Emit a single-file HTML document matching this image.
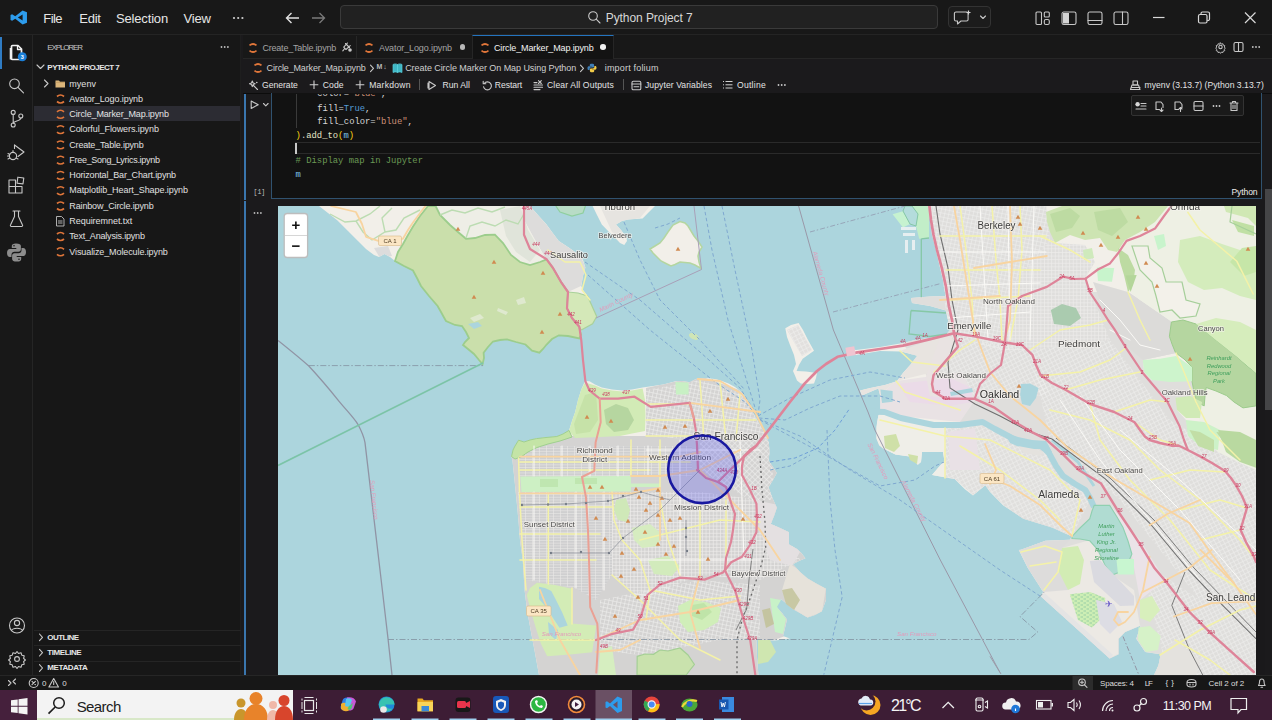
<!DOCTYPE html>
<html lang="en"><head>
<meta charset="utf-8">
<title>Circle_Marker_Map.ipynb - Python Project 7 - Visual Studio Code</title>
<style>
*{box-sizing:border-box;margin:0;padding:0}
html,body{width:1272px;height:720px;overflow:hidden;background:#161616}
body{font-family:"Liberation Sans",sans-serif;color:#ccc;position:relative;font-size:9px}
.abs{position:absolute}
.t{position:absolute;white-space:nowrap;line-height:1;color:#d4d4d4}
svg{position:absolute;overflow:visible}
#titlebar{left:0;top:0;width:1272px;height:35px;background:#181818;border-bottom:1px solid #242424}
#activity{left:0;top:35px;width:33px;height:640px;background:#181818;border-right:1px solid #252525}
#sidebar{left:33px;top:35px;width:208px;height:640px;background:#171717;border-right:1px solid #1e1e1e}
#editor{left:241px;top:35px;width:1031px;height:640px;background:#1b1a1c}
#statusbar{left:0;top:675px;width:1272px;height:15px;background:#171717;border-top:1px solid #262626}
#taskbar{left:0;top:690px;width:1272px;height:30px;background:#3d1d35}
.menu{font-size:13px;color:#e6e6e6}
.fn{font-size:9px;color:#e0e0e0;left:69.3px}
.hd{font-size:8px;font-weight:bold;color:#e6e6e6;left:47.3px}
.ic{stroke:#c8c8c8;fill:none;stroke-width:1.1;stroke-linecap:round;stroke-linejoin:round}
.jp{stroke:#e0763a;fill:none;stroke-width:1.7;stroke-linecap:butt}
.tb{font-size:8.6px;color:#e4e4e4}
.code{font-family:"Liberation Mono",monospace;font-size:8.85px;color:#d4d4d4;position:absolute;white-space:pre;line-height:1}
.sb{font-size:8px;color:#dedede}
</style>
</head>
<body>
<div id="titlebar" class="abs"></div>
<div id="activity" class="abs"></div>
<div id="sidebar" class="abs"></div>
<div id="editor" class="abs"></div>

<!-- ===== TITLE BAR ===== -->
<svg style="left:9.5px;top:10px" width="17.5" height="15" viewBox="0 0 100 100" preserveAspectRatio="none"><path fill="#2d9cec" fill-rule="evenodd" d="M72 3 L97 15 V85 L72 97 L30 58 L12 72 L3 67 V33 L12 28 L30 42 Z M72 30 L45 50 L72 70 Z"></path></svg>
<span class="t menu" style="left: 43.3px; top: 11.59px; letter-spacing: -0.563px;">File</span>
<span class="t menu" style="left: 79.3px; top: 11.59px; letter-spacing: -0.277px;">Edit</span>
<span class="t menu" style="left: 116px; top: 11.59px; letter-spacing: -0.165px;">Selection</span>
<span class="t menu" style="left: 183.6px; top: 11.59px; letter-spacing: -0.238px;">View</span>
<svg style="left:232px;top:15px" width="13" height="6"><circle cx="2" cy="3" r="1.1" fill="#d0d0d0"></circle><circle cx="6.2" cy="3" r="1.1" fill="#d0d0d0"></circle><circle cx="10.4" cy="3" r="1.1" fill="#d0d0d0"></circle></svg>
<svg style="left:285px;top:11px" width="42" height="14"><path d="M14 7H1.5M6.5 2L1.5 7l5 5" stroke="#e0e0e0" stroke-width="1.4" fill="none"></path><path d="M27 7h12.5M34.5 2l5 5-5 5" stroke="#7a7a7a" stroke-width="1.3" fill="none"></path></svg>
<div class="abs" style="left:340px;top:5px;width:598px;height:24px;background:#212121;border:1px solid #3a3a3a;border-radius:4px"></div>
<svg style="left:587px;top:10px" width="14" height="14"><circle cx="6" cy="6" r="4.3" class="ic" stroke-width="1.2"></circle><path d="M9.2 9.2L13 13" class="ic" stroke-width="1.3"></path></svg>
<span class="t" style="left: 605.7px; font-size: 12px; color: rgb(216, 216, 216); top: 12.36px; letter-spacing: -0.066px;">Python Project 7</span>
<div class="abs" style="left:947.5px;top:5.5px;width:43px;height:22.5px;border:1px solid #333;border-radius:4px;background:#1c1c1c"></div>
<svg style="left:953px;top:9.5px" width="34" height="15"><path class="ic" stroke-width="1.3" d="M3 2h10.5a1.6 1.6 0 0 1 1.6 1.6v5.8a1.6 1.6 0 0 1-1.6 1.6H8l-3.5 3v-3H3a1.6 1.6 0 0 1-1.6-1.6V3.6A1.6 1.6 0 0 1 3 2z"></path><path d="M15.5 0.5v4M13.5 2.5h4" stroke="#d8d8d8" stroke-width="1.2"></path><path class="ic" d="M27.5 6l2.5 2.5L32.500 6" stroke-width="1.2"></path></svg>
<svg style="left:1035px;top:10.5px" width="95" height="15"><g class="ic" stroke-width="1.2"><rect x="1" y="1" width="5.5" height="12.5" rx="1"></rect><rect x="9.3" y="1" width="5" height="5" rx="1"></rect><rect x="9.3" y="8.5" width="5" height="5" rx="1.6"></rect><rect x="27" y="1" width="14" height="12.500" rx="1.8"></rect><rect x="53" y="1" width="14" height="12.5" rx="1.800"></rect><path d="M53 9.500h14"></path><rect x="79" y="1" width="14" height="12.5" rx="1.8"></rect><path d="M87.500 1v12.500"></path></g><path d="M28 2h6v10.500h-6z" fill="#d4d4d4"></path></svg>
<svg style="left:1152px;top:11px" width="106" height="14"><g stroke="#d8d8d8" stroke-width="1.2" fill="none"><path d="M1 6.500h11.500"></path><rect x="46.500" y="3.500" width="8.500" height="8.500" rx="1.500"></rect><path d="M49 3.400V2.500a1.500 1.500 0 0 1 1.500-1.500H56a1.500 1.500 0 0 1 1.500 1.500V8a1.500 1.500 0 0 1-1.500 1.500h-.8"></path><path d="M93 1.500l10.500 10.500M103.500 1.500L93 12"></path></g></svg>

<!-- ===== ACTIVITY BAR ===== -->
<div class="abs" style="left:0;top:37px;width:2px;height:31.500px;background:#2f7cc4"></div>
<svg style="left:0;top:35px" width="33" height="640">
<!-- files -->
<g stroke="#f2f2f2" stroke-width="1.700" fill="none" stroke-linejoin="round"><path d="M12.500 10.500h5.500l3.500 3.500v9.500a1 1 0 0 1-1 1h-8a1 1 0 0 1-1-1v-12a1 1 0 0 1 1-1z" fill="#181818"></path><path d="M17.500 10.500v4h4" stroke-width="1.300"></path><path d="M10.500 13v11.500" stroke-width="1.600"></path></g>
<circle cx="22.300" cy="21.800" r="4.500" fill="#1a7fd8"></circle>
<text x="22.300" y="23.800" font-size="5.500" fill="#fff" text-anchor="middle" font-family="'Liberation Sans',sans-serif" font-weight="bold">3</text>
<!-- search -->
<g class="ic" stroke="#9a9a9a" stroke-width="1.400"><circle cx="14.500" cy="48.800" r="4.800"></circle><path d="M18 52.300l5.500 5.500"></path></g>
<!-- scm -->
<g class="ic" stroke="#9a9a9a" stroke-width="1.300"><circle cx="13.200" cy="77.400" r="2"></circle><circle cx="13.200" cy="90" r="2"></circle><circle cx="20.800" cy="81" r="2"></circle><path d="M13.200 79.400v8.600M20.800 83c0 3.500-7.600 2.500-7.600 5.500"></path></g>
<!-- debug -->
<g class="ic" stroke="#9a9a9a" stroke-width="1.300"><path d="M14.500 110l9.500 7-6 4.500"></path><path d="M14.500 110v3.500"></path><circle cx="13" cy="121" r="3.600"></circle><path d="M8 118.500l1.800 1M8 124l1.800-1M18 124l-1.800-1M13 117v-1.500M7.500 121h2"></path></g>
<!-- extensions -->
<g class="ic" stroke="#9a9a9a" stroke-width="1.300"><path d="M9 145h6.500v13H9zM15.500 151.500H22v6.500h-6.500M9 151.500h6.500"></path><rect x="17.500" y="142.500" width="6" height="6" transform="rotate(8 20 145)"></rect></g>
<!-- flask -->
<g class="ic" stroke="#9a9a9a" stroke-width="1.300"><path d="M13 176h7M14.500 176v5.500l-4 8.500a1 1 0 0 0 1 1.500h10a1 1 0 0 0 1-1.500l-4-8.500V176"></path></g>
<!-- python -->
<g fill="#8c8c8c"><path d="M16 208.500c-3 0-4.200 1-4.200 2.600v2h4.500v.8H10c-1.800 0-3 1.400-3 4s1.200 4 2.800 4h1.700v-2.400c0-1.600 1.300-2.800 3-2.800h4c1.400 0 2.400-1 2.400-2.400v-3.200c0-1.600-1.400-2.600-4.900-2.600zm-2 1.500a.8.800 0 1 1 0 1.600.8.800 0 0 1 0-1.600z"></path><path d="M17 226.500c3 0 4.200-1 4.200-2.600v-2h-4.500v-.8H23c1.800 0 3-1.400 3-4s-1.200-4-2.800-4h-1.700v2.400c0 1.600-1.300 2.800-3 2.800h-4c-1.400 0-2.400 1-2.400 2.400v3.200c0 1.600 1.400 2.600 4.900 2.600zm2-1.500a.8.800 0 1 1 0-1.600.8.800 0 0 1 0 1.600z"></path></g>
<!-- account -->
<g class="ic" stroke="#9a9a9a" stroke-width="1.200"><circle cx="17" cy="590.500" r="7.500"></circle><circle cx="17" cy="588" r="2.600"></circle><path d="M11.500 595.500c1.500-3 9.500-3 11 0"></path></g>
<!-- gear -->
<g class="ic" stroke="#9a9a9a" stroke-width="1.300"><circle cx="17" cy="624" r="2.400"></circle><path d="M17 616.500l1.500 2 2.500-.8 .8 2.500 2.400 .6-.6 2.500 1.800 1.700-1.800 1.700 .6 2.500-2.400 .6-.8 2.500-2.500-.8-1.500 2-1.500-2-2.500 .8-.8-2.500-2.400-.6 .6-2.500L8.600 625l1.800-1.700-.6-2.500 2.400-.6 .8-2.500 2.500 .8z"></path></g>
</svg>

<!-- ===== SIDEBAR ===== -->
<span class="t" style="left: 47.3px; font-size: 8px; color: rgb(196, 196, 196); top: 43.84px; letter-spacing: -1.135px;">EXPLORER</span>
<svg style="left:220px;top:44px" width="10" height="6"><circle cx="1.500" cy="3" r=".9" fill="#c0c0c0"></circle><circle cx="4.700" cy="3" r=".9" fill="#c0c0c0"></circle><circle cx="7.900" cy="3" r=".9" fill="#c0c0c0"></circle></svg>
<svg style="left:36px;top:63px" width="9" height="8"><path class="ic" d="M1 2l3.500 3.500L8 2" stroke-width="1.200"></path></svg>
<span class="t hd" style="top: 63.64px; letter-spacing: -0.501px;">PYTHON PROJECT 7</span>
<svg style="left:43px;top:79px" width="7" height="9"><path class="ic" d="M1.500 1l3.500 3.500L1.500 8" stroke-width="1.200"></path></svg>
<svg style="left:55px;top:78.500px" width="11" height="9"><path d="M.5 1.500h3.500l1 1.300h5v5.700h-9.500z" fill="#dcb67a"></path><path d="M.5 3.300h9.500" stroke="#b08d55" stroke-width=".6"></path></svg>
<div class="abs" style="left:34px;top:105.700px;width:206px;height:15.500px;background:#2c2c33"></div>
<span class="t fn" style="top: 79.57px; letter-spacing: 0.037px;">myenv</span>
<span class="t fn" style="top: 94.77px; letter-spacing: -0.071px;">Avator_Logo.ipynb</span>
<span class="t fn" style="color: rgb(228, 228, 228); top: 110.07px; letter-spacing: -0.132px;">Circle_Marker_Map.ipynb</span>
<span class="t fn" style="top: 125.37px; letter-spacing: -0.093px;">Colorful_Flowers.ipynb</span>
<span class="t fn" style="top: 140.67px; letter-spacing: -0.187px;">Create_Table.ipynb</span>
<span class="t fn" style="top: 155.97px; letter-spacing: -0.288px;">Free_Song_Lyrics.ipynb</span>
<span class="t fn" style="top: 171.17px; letter-spacing: -0.149px;">Horizontal_Bar_Chart.ipynb</span>
<span class="t fn" style="top: 186.47px; letter-spacing: -0.067px;">Matplotlib_Heart_Shape.ipynb</span>
<span class="t fn" style="top: 201.77px; letter-spacing: -0.142px;">Rainbow_Circle.ipynb</span>
<span class="t fn" style="top: 216.97px; letter-spacing: -0.042px;">Requiremnet.txt</span>
<span class="t fn" style="top: 232.27px; letter-spacing: -0.192px;">Text_Analysis.ipynb</span>
<span class="t fn" style="top: 247.57px; letter-spacing: -0.104px;">Visualize_Molecule.ipynb</span>
<svg style="left:55px;top:90px" width="12" height="170">
<g class="jp">
<path d="M2 6.500c2-1.800 5-1.800 7 0M2 11.500c2 1.800 5 1.800 7 0"></path>
<path d="M2 21.800c2-1.800 5-1.800 7 0M2 26.800c2 1.800 5 1.800 7 0"></path>
<path d="M2 37.100c2-1.800 5-1.800 7 0M2 42.100c2 1.800 5 1.800 7 0"></path>
<path d="M2 52.400c2-1.800 5-1.800 7 0M2 57.400c2 1.800 5 1.800 7 0"></path>
<path d="M2 67.600c2-1.800 5-1.800 7 0M2 72.600c2 1.800 5 1.800 7 0"></path>
<path d="M2 82.900c2-1.800 5-1.800 7 0M2 87.900c2 1.800 5 1.800 7 0"></path>
<path d="M2 98.200c2-1.800 5-1.800 7 0M2 103.200c2 1.800 5 1.800 7 0"></path>
<path d="M2 113.500c2-1.800 5-1.800 7 0M2 118.500c2 1.800 5 1.800 7 0"></path>
<path d="M2 144c2-1.800 5-1.800 7 0M2 149c2 1.800 5 1.800 7 0"></path>
<path d="M2 159.300c2-1.800 5-1.800 7 0M2 164.300c2 1.800 5 1.800 7 0"></path>
</g>
<g stroke="#c0c0c0" stroke-width=".9" fill="none"><path d="M1.500 126.500h5l2.500 2.500v7h-7.500z"></path><path d="M3 131h4.500M3 133h4.500"></path></g>
</svg>
<!-- bottom panes -->
<div class="abs" style="left:34px;top:629.500px;width:207px;height:1px;background:#252525"></div>
<div class="abs" style="left:34px;top:645.200px;width:207px;height:1px;background:#252525"></div>
<div class="abs" style="left:34px;top:660.600px;width:207px;height:1px;background:#252525"></div>
<svg style="left:37.500px;top:633px" width="7" height="40"><g class="ic" stroke-width="1.200"><path d="M1.500 1l3 3.300-3 3.300M1.500 16.400l3 3.300-3 3.300M1.500 31.700l3 3.300-3 3.300"></path></g></svg>
<span class="t hd" style="top: 633.64px; letter-spacing: -0.544px;">OUTLINE</span>
<span class="t hd" style="top: 649.04px; letter-spacing: -0.418px;">TIMELINE</span>
<span class="t hd" style="top: 664.34px; letter-spacing: -0.376px;">METADATA</span>

<!-- ===== TABS ===== -->
<div class="abs" style="left:243px;top:35px;width:1029px;height:23.500px;background:#181818;border-bottom:1px solid #262626"></div>
<div class="abs" style="left:355.500px;top:36px;width:1px;height:22px;background:#262626"></div>
<div class="abs" style="left:472px;top:35px;width:142px;height:24px;background:#131313;border-top:1.500px solid #2474bf;border-left:1px solid #262626;border-right:1px solid #262626"></div>
<svg style="left:248px;top:42px" width="250" height="12"><g class="jp" stroke-width="1.800"><path d="M1.500 3.400c2-1.600 5-1.600 7 0M1.500 8.600c2 1.600 5 1.600 7 0"></path><path d="M117.500 3.400c2-1.600 5-1.600 7 0M117.500 8.600c2 1.600 5 1.600 7 0"></path><path d="M233.500 3.400c2-1.600 5-1.600 7 0M233.500 8.600c2 1.600 5 1.600 7 0"></path></g></svg>
<span class="t" style="left: 262.5px; font-size: 9px; color: rgb(164, 164, 164); top: 43.67px; letter-spacing: -0.226px;">Create_Table.ipynb</span>
<svg style="left:342px;top:42px" width="11" height="11"><g class="ic" stroke="#b0b0b0" stroke-width="1"><path d="M3.500 1.500l4 4M5.500 1l-3.800 4.200 2.300 2.300L8.200 3.700M2.700 6.500L.8 8.800"></path></g><circle cx="8" cy="8" r="1.800" fill="#c8c8c8"></circle></svg>
<span class="t" style="left: 379px; font-size: 9px; color: rgb(164, 164, 164); top: 43.67px; letter-spacing: -0.112px;">Avator_Logo.ipynb</span>
<div class="abs" style="left:459.700px;top:44.200px;width:5.600px;height:5.600px;border-radius:50%;background:#b8b8b8"></div>
<span class="t" style="left: 494px; font-size: 9px; color: rgb(244, 244, 244); top: 43.67px; letter-spacing: -0.132px;">Circle_Marker_Map.ipynb</span>
<div class="abs" style="left:600.200px;top:44.200px;width:5.600px;height:5.600px;border-radius:50%;background:#f0f0f0"></div>
<svg style="left:1214px;top:41px" width="52" height="12"><g class="ic" stroke="#c4c4c4" stroke-width="1"><circle cx="6.500" cy="6" r="1.700"></circle><path d="M6.500 1l1.100 1.500 1.800-.5.500 1.800 1.800.500-.5 1.700 1 1.400-1 1.400.5 1.700-1.800.500-.5 1.800-1.800-.5-1.100 1.500-1.100-1.500-1.800.5-.5-1.800-1.800-.5.500-1.700-1-1.400 1-1.400-.5-1.700 1.800-.5.500-1.800 1.800.5z" transform="translate(1.170 1.080) scale(.82)"></path><rect x="20" y="1.500" width="9" height="9" rx="1.500"></rect><path d="M24.500 1.500v9"></path></g><circle cx="38.800" cy="6" r=".9" fill="#c4c4c4"></circle><circle cx="42" cy="6" r=".9" fill="#c4c4c4"></circle><circle cx="45.200" cy="6" r=".9" fill="#c4c4c4"></circle></svg>

<!-- ===== BREADCRUMB ===== -->
<svg style="left:253px;top:62px" width="12" height="12"><g class="jp" stroke-width="1.800"><path d="M1.500 3.400c2-1.600 5-1.600 7 0M1.500 8.600c2 1.600 5 1.600 7 0"></path></g></svg>
<span class="t" style="left: 266.6px; font-size: 9px; color: rgb(208, 208, 208); top: 63.67px; letter-spacing: -0.154px;">Circle_Marker_Map.ipynb</span>
<svg style="left:369px;top:63.500px" width="6" height="9"><path class="ic" stroke="#aaa" d="M1.500 1.200l3 3.200-3 3.200"></path></svg>
<span class="t" style="left: 376.5px; font-size: 7px; font-weight: bold; color: rgb(184, 184, 184); top: 63.21px; letter-spacing: 0.828px;">M↓</span>
<svg style="left:392px;top:62.500px" width="11" height="11"><path d="M1 1.500c1.500-.8 3-.8 4.500 0v8c-1.500-.8-3-.8-4.500 0zM5.500 1.500c1.500-.8 3-.8 4.500 0v8c-1.500-.8-3-.8-4.500 0z" fill="#3fb6c4" stroke="#59d0dd" stroke-width=".7"></path></svg>
<span class="t" style="left: 405.2px; font-size: 9px; color: rgb(208, 208, 208); top: 63.67px; letter-spacing: -0.064px;">Create Circle Marker On Map Using Python</span>
<svg style="left:578.500px;top:63.500px" width="6" height="9"><path class="ic" stroke="#aaa" d="M1.500 1.200l3 3.200-3 3.200"></path></svg>
<svg style="left:587px;top:62.500px" width="10" height="10" viewBox="6 208 21 19"><path fill="#3f7fb8" d="M16 208.500c-3 0-4.200 1-4.200 2.600v2h4.500v.8H10c-1.800 0-3 1.400-3 4s1.200 4 2.800 4h1.700v-2.400c0-1.600 1.300-2.800 3-2.800h4c1.400 0 2.400-1 2.400-2.400v-3.200c0-1.600-1.400-2.600-4.900-2.600z"></path><path fill="#f2cb48" d="M17 226.500c3 0 4.200-1 4.200-2.600v-2h-4.500v-.8H23c1.800 0 3-1.400 3-4s-1.200-4-2.800-4h-1.700v2.400c0 1.600-1.300 2.800-3 2.800h-4c-1.400 0-2.400 1-2.400 2.400v3.200c0 1.600 1.400 2.600 4.900 2.600z"></path></svg>
<span class="t" style="left: 604.7px; font-size: 9px; color: rgb(208, 208, 208); top: 63.67px; letter-spacing: 0.191px;">import folium</span>

<!-- ===== NOTEBOOK TOOLBAR ===== -->
<div class="abs" style="left:243px;top:92.500px;width:1029px;height:1px;background:#0c0c0c"></div>
<svg style="left:248.500px;top:79.500px" width="10" height="10"><g class="ic" stroke="#d0d0d0" stroke-width="1"><path d="M3.300 1l.8 2 2 .8-2 .8-.8 2-.8-2-2-.8 2-.8zM4.500 5.500l4 4"></path></g><circle cx="7.800" cy="2.500" r=".8" fill="#d0d0d0"></circle></svg>
<span class="t tb" style="left: 262px; top: 80.76px; letter-spacing: -0.005px;">Generate</span>
<svg style="left:309px;top:80px" width="10" height="10"><path d="M5 .5v8.500M.7 4.800h8.600" stroke="#d0d0d0" stroke-width="1.100"></path></svg>
<span class="t tb" style="left: 322.8px; top: 80.76px; letter-spacing: 0.063px;">Code</span>
<svg style="left:354.500px;top:80px" width="10" height="10"><path d="M5 .5v8.500M.7 4.800h8.600" stroke="#d0d0d0" stroke-width="1.100"></path></svg>
<span class="t tb" style="left: 369.2px; top: 80.76px; letter-spacing: 0.23px;">Markdown</span>
<div class="abs" style="left:419.300px;top:79px;width:1px;height:11px;background:#555"></div>
<svg style="left:427px;top:79.500px" width="11" height="11"><path class="ic" stroke="#d8d8d8" stroke-width="1.200" d="M2 1.500l6.500 4-6.500 4zM1 3v5"></path></svg>
<span class="t tb" style="left: 442.4px; top: 80.76px; letter-spacing: 0.052px;">Run All</span>
<svg style="left:481.500px;top:79.500px" width="11" height="11"><path class="ic" stroke="#d8d8d8" stroke-width="1.200" d="M2.200 3.500a4 4 0 1 1-.7 3.200M1.200 1.200v2.600h2.600"></path></svg>
<span class="t tb" style="left: 494.8px; top: 80.76px; letter-spacing: -0.043px;">Restart</span>
<svg style="left:532.500px;top:79.500px" width="11" height="11"><g class="ic" stroke="#d0d0d0" stroke-width="1"><path d="M1 5h8.500M1 7.300h8.500M1 9.600h6M5.500 .7l2.800 2.800M8.300 .7L5.500 3.500M1 2.600h3"></path></g></svg>
<span class="t tb" style="left: 547px; top: 80.76px; letter-spacing: 0.148px;">Clear All Outputs</span>
<div class="abs" style="left:623.300px;top:79px;width:1px;height:11px;background:#555"></div>
<svg style="left:630.500px;top:79.500px" width="11" height="11"><g class="ic" stroke="#d0d0d0" stroke-width="1"><rect x="1" y="1.300" width="8.800" height="8.400" rx="1.300"></rect><path d="M1 4h8.800M3 6.800h4.800"></path></g></svg>
<span class="t tb" style="left: 645px; top: 80.76px; letter-spacing: 0.073px;">Jupyter Variables</span>
<svg style="left:721.500px;top:80px" width="11" height="10"><path d="M1 1.500h1M3.500 1.500h7M1 4.800h1M3.500 4.800h7M1 8h1M3.500 8h7" stroke="#d0d0d0" stroke-width="1"></path></svg>
<span class="t tb" style="left: 737px; top: 80.76px; letter-spacing: 0.252px;">Outline</span>
<svg style="left:777px;top:82px" width="10" height="6"><circle cx="1.500" cy="3" r=".9" fill="#c8c8c8"></circle><circle cx="4.700" cy="3" r=".9" fill="#c8c8c8"></circle><circle cx="7.900" cy="3" r=".9" fill="#c8c8c8"></circle></svg>
<svg style="left:1129.500px;top:79.500px" width="11" height="11"><g class="ic" stroke="#d0d0d0" stroke-width="1"><rect x="3" y="1" width="4.500" height="4"></rect><path d="M2 5h6.500l1.500 4.500h-9.500zM1 7.500h9"></path></g></svg>
<span class="t tb" style="left: 1144.5px; top: 80.96px; letter-spacing: 0.028px;">myenv (3.13.7) (Python 3.13.7)</span>

<!-- ===== CODE CELL ===== -->
<div class="abs" style="left:243.500px;top:93.500px;width:2.500px;height:106.500px;background:#3a76ae"></div><div class="abs" style="left:243.500px;top:201px;width:2.500px;height:474.500px;background:#3a76ae"></div>
<div class="abs" style="left:270.500px;top:93px;width:991.500px;height:106px;background:#121212;border:1px solid #30526f;border-top:none"></div>
<div class="abs" style="left:295.500px;top:93.500px;width:1px;height:34.500px;background:#3a3a3a"></div>
<div class="abs" style="left:295px;top:141.600px;width:965px;height:12.800px;border-top:1px solid #2a2a2a;border-bottom:1px solid #2a2a2a"></div>
<div class="abs" style="left:295px;top:142.500px;width:1.600px;height:11.500px;background:#c8c8c8"></div>
<svg style="left:250px;top:99.500px" width="20" height="10"><path class="ic" stroke="#d8d8d8" stroke-width="1.200" d="M1.200 1l7 3.700-7 3.700z"></path><path class="ic" stroke="#c0c0c0" stroke-width="1" d="M13.500 3.500l2.300 2.300 2.300-2.300"></path></svg>
<div class="abs" style="left:271.500px;top:93.500px;width:989px;height:8.500px;overflow:hidden"><span class="code" style="left:45.800px;top:-3.200px"><span style="color:#d4d4d4">color=</span><span style="color:#ce9178">"blue"</span>,</span></div>
<span class="code" style="left: 317.3px; top: 104.74px;"><span style="color:#d8d8d8">fill=</span><span style="color:#569cd6">True</span>,</span>
<span class="code" style="left: 317.3px; top: 117.94px;"><span style="color:#d8d8d8">fill_color=</span><span style="color:#ce9178">"blue"</span>,</span>
<span class="code" style="left: 295.6px; top: 131.54px;"><span style="color:#ffd710">)</span>.<span style="color:#e6e6c8">add_to</span><span style="color:#ffd710">(</span><span style="color:#7cc4ec">m</span><span style="color:#ffd710">)</span></span>
<span class="code" style="left: 295.6px; color: rgb(106, 153, 85); top: 157.34px;"># Display map in Jupyter</span>
<span class="code" style="left: 295.6px; color: rgb(124, 196, 236); top: 171.04px;">m</span>
<span class="code" style="left: 253.5px; font-size: 6.5px; color: rgb(196, 196, 196); top: 189.75px;">[1]</span>
<span class="t" style="left: 1231.5px; font-size: 8.6px; color: rgb(236, 236, 236); top: 187.56px; letter-spacing: -0.128px;">Python</span>
<div class="abs" style="left:1130.500px;top:95px;width:113.500px;height:20.800px;background:#1a1a1a;border:1px solid #333;border-radius:2px"></div>
<svg style="left:1134px;top:99.500px" width="108" height="12"><g class="ic" stroke="#d0d0d0" stroke-width="1"><path d="M7 3.500h5M7 6h5M2 9h10"></path><path d="M22 2h5l2 2.500v3M22 2v7.500h3.500M27.500 8v3.500M26 10l1.500 1.500L29 10"></path><path d="M41 2h5l2 2.500v3M41 2v7.500h3.500M46.500 7.500v4M45 9l1.500-1.500L48 9"></path><rect x="60" y="1.500" width="9" height="9" rx="1.200"></rect><path d="M60 6h9"></path><path d="M96 3h8M97 3v7.500h6V3M98.500 3V1.500h3V3M99 5v3.500M101 5v3.500"></path></g><circle cx="3.600" cy="4.300" r="2.200" fill="#d8d8d8"></circle><circle cx="79.500" cy="6" r=".9" fill="#ccc"></circle><circle cx="82.500" cy="6" r=".9" fill="#ccc"></circle><circle cx="85.500" cy="6" r=".9" fill="#ccc"></circle></svg>
<!-- output gutter -->
<svg style="left:253px;top:209.500px" width="10" height="6"><circle cx="1.500" cy="3" r=".9" fill="#b8b8b8"></circle><circle cx="4.700" cy="3" r=".9" fill="#b8b8b8"></circle><circle cx="7.900" cy="3" r=".9" fill="#b8b8b8"></circle></svg>
<!-- scrollbar -->
<div class="abs" style="left:1265px;top:189px;width:7px;height:221px;background:#454547"></div>
<div class="abs" style="left:1256px;top:199.500px;width:9px;height:476px;background:#1a191b"></div>

<!-- ===== STATUS BAR ===== -->
<div id="statusbar" class="abs"></div>
<svg style="left:0;top:676px" width="1272" height="14">
<g class="ic" stroke="#c8c8c8" stroke-width="1"><path d="M8.500 4.500l2.500 2.500-2.500 2.500M15.500 3l-2.500 2.500 2.500 2.500"></path>
<circle cx="33.700" cy="7" r="4.500"></circle><path d="M32 5.300l3.400 3.400M35.400 5.300L32 8.700"></path>
<path d="M53.700 2.500l4.800 8.500h-9.600zM53.700 5.500v3"></path>
</g>
<rect x="1072.500" y="0" width="20.500" height="14" fill="#2c2c2c"></rect>
<g class="ic" stroke="#d0d0d0" stroke-width="1"><circle cx="1082" cy="6.300" r="3.300"></circle><path d="M1084.500 8.800l2.500 2.500M1080.500 6.300h3M1082 4.800v3"></path>
<path d="M1187 6.500c0-2.500 2-3 4.500-3s4.500 .5 4.500 3v2c0 1.500-2 2.500-4.500 2.500s-4.500-1-4.500-2.500zM1187 6.500h9"></path><path d="M1190 8v1M1193 8v1"></path>
<path d="M1258.500 9.500c.8-.8 1-1.800 1-3.500 0-1.800 1-3 2.300-3s2.300 1.200 2.300 3c0 1.700 .2 2.700 1 3.500zM1261 11.300h1.600"></path></g>
</svg>
<span class="t sb" style="left: 42px; top: 679.54px;">0</span>
<span class="t sb" style="left: 62.3px; top: 679.54px;">0</span>
<span class="t sb" style="left: 1100px; top: 679.54px; letter-spacing: -0.198px;">Spaces: 4</span>
<span class="t sb" style="left: 1144.7px; top: 679.54px; letter-spacing: -1.172px;">LF</span>
<span class="t sb" style="left: 1165.4px; top: 679.24px; letter-spacing: 0.541px;">{ }</span>
<span class="t sb" style="left: 1208.5px; top: 679.54px; letter-spacing: -0.03px;">Cell 2 of 2</span>

<!-- ===== TASKBAR ===== -->
<div id="taskbar" class="abs"></div>
<div class="abs" style="left:0;top:690px;width:36.500px;height:30px;background:#45203c"></div>
<svg style="left:10.500px;top:697.500px" width="16.500" height="16.500" viewBox="0 0 16 16"><path fill="#f4f4f4" d="M0 2.300l6.500-.9v6.200H0zM7.300 1.300L16 0v7.600H7.300zM0 8.400h6.500v6.200L0 13.700zM7.300 8.400H16V16l-8.700-1.300z"></path></svg>
<div class="abs" style="left:36.500px;top:690px;width:256px;height:30px;background:#f3f3f3;border-bottom:2px solid #d8e8c8"></div>
<svg style="left:47px;top:696px" width="20" height="19"><circle cx="12" cy="7" r="5.300" fill="none" stroke="#1c1c1c" stroke-width="1.500"></circle><path d="M8.200 11L1.500 17.700" stroke="#1c1c1c" stroke-width="1.700"></path></svg>
<span class="t" style="left: 76.7px; font-size: 15px; color: rgb(32, 32, 32); top: 698.55px; letter-spacing: -0.589px;">Search</span>
<svg style="left:232px;top:690px" width="61" height="30"><g fill="#c9962c"><circle cx="9" cy="13" r="4.500"></circle><path d="M2 30c0-7 3-11 7-11s7 4 7 11z"></path></g><g fill="#e8832a"><circle cx="24" cy="8.500" r="6.500"></circle><path d="M12 30c0-10 5-16 12-16s12 6 12 16z"></path></g><g fill="#f0b8a8"><circle cx="41" cy="15" r="4"></circle><path d="M35 30c0-6 2.500-10 6-10s6 4 6 10z"></path></g><g fill="#d8452c"><circle cx="52" cy="10.500" r="5.500"></circle><path d="M43 30c0-9 4-14 9-14s9 5 9 14z"></path></g></svg>
<svg style="left:292px;top:690px" width="980" height="30">
<!-- task view -->
<g stroke="#e8e8e8" stroke-width="1.200" fill="none"><rect x="12.500" y="10.500" width="9" height="10"></rect><path d="M10 8.500v2M10 20.500v2M24.500 8.500v2M24.500 20.500v2M10 12v7M24.500 12v7M12.500 7.500h9M12.500 23.500h9" stroke-width="1"></path></g>
<!-- active app bg -->
<rect x="303.500" y="0" width="36.500" height="30" fill="#6a5064"></rect>
<!-- underlines -->
<g fill="#9fd0ee"><rect x="81" y="28.500" width="27" height="1.500"></rect><rect x="119.500" y="28.500" width="27" height="1.500"></rect><rect x="157.500" y="28.500" width="27" height="1.500"></rect><rect x="195.500" y="28.500" width="27" height="1.500"></rect><rect x="233.500" y="28.500" width="27" height="1.500"></rect><rect x="271.500" y="28.500" width="27" height="1.500"></rect><rect x="303.500" y="28.500" width="36.500" height="1.500"></rect><rect x="346.500" y="28.500" width="27" height="1.500"></rect><rect x="384" y="28.500" width="27" height="1.500"></rect><rect x="422" y="28.500" width="27" height="1.500"></rect></g>
<!-- copilot -->
<g><path d="M50.500 10.500c1-3 4-3.500 6.500-2.500l-2 12c-3 1.500-6.500 0-6.500-3z" fill="#2f7fe8"></path><path d="M55 7.500c4-1 8 .5 9 4l-2.500 7c-1.500 2.500-5 2.500-7 1z" fill="#c858d8"></path><path d="M49 14c2-2 6-1.500 7.500 1l1 5c-2.500 2-7 1.500-8.500-1.500z" fill="#f0b030"></path><path d="M54 9c2-1.500 5-1 6 1l-2 6c-1.500 1-4 1-5-.5z" fill="#58c8f0"></path><path d="M57 16l4-3-1.500 5.500c-1 1.500-3 1.500-4 .5z" fill="#50c878"></path></g>
<!-- edge -->
<g><circle cx="94.500" cy="14.500" r="8" fill="#1f8ad8"></circle><path d="M87 14c1-5 6-8 11-6 3 1.300 4.500 4 4.500 6.500h-9c0 3 3 5 7 4-2 3-7 4-10.500 1.500-2-1.500-3-3.500-3-6z" fill="#37c2b1"></path><circle cx="91.500" cy="19.500" r="3.300" fill="#e8e8e8"></circle></g>
<!-- explorer -->
<g><path d="M125.500 8.500h5l1.300 1.800H141v11h-15.500z" fill="#e8a820"></path><path d="M125.500 12h15.500v9.300h-15.500z" fill="#f8d458"></path><rect x="129.500" y="16" width="7.500" height="5.300" fill="#3a8ad8"></rect></g>
<!-- cam -->
<g><rect x="163.500" y="7.500" width="15" height="14.500" rx="3" fill="#181818"></rect><rect x="165" y="11" width="9" height="7" rx="1.500" fill="#e8344c"></rect><path d="M174 13l4-2v7l-4-2z" fill="#e8344c"></path></g>
<!-- shield -->
<g><rect x="201" y="6" width="16" height="17" rx="3" fill="#1858b8"></rect><path d="M209 9l5 2v4c0 3-2 5-5 6-3-1-5-3-5-6v-4z" fill="#f0f0f0"></path><path d="M209 11.500l3 1.200v2.500c0 2-1.200 3.200-3 4-1.800-.8-3-2-3-4v-2.500z" fill="#1858b8"></path></g>
<!-- whatsapp -->
<g><circle cx="246.500" cy="14.500" r="8" fill="#2cb742" stroke="#f4f4f4" stroke-width="1.500"></circle><path d="M243 11c0 4 3 7 7 7l1-2-2-1-1 1c-1.500-.5-2.500-1.500-3-3l1-1-1-2z" fill="#fff"></path></g>
<!-- media -->
<g><circle cx="284.500" cy="14.500" r="8" fill="#2a1a28" stroke="#f08a3c" stroke-width="1.600"></circle><circle cx="284.500" cy="14.500" r="5" fill="#f4f4f4"></circle><path d="M283 12l4 2.500-4 2.500z" fill="#402040"></path></g>
<!-- vscode -->
<g transform="translate(313.500 6.500)"><path fill="#2d9cec" fill-rule="evenodd" d="M12 0l4.500 2v12.500l-4.500 2-7.500-7-3 2.300L0 11V5.500l1.500-.8 3 2.300zM12 4.800L7.500 8.200l4.500 3.500z"></path></g>
<!-- chrome -->
<g><circle cx="359.700" cy="14.500" r="8" fill="#e8453c"></circle><path d="M359.700 14.500l-7-4a8 8 0 0 0 3.500 11z" fill="#34a853"></path><path d="M359.700 14.500l-3.500 7a8 8 0 0 0 11.300-7.500z" fill="#fbc116"></path><circle cx="359.700" cy="14.500" r="3.600" fill="#4a8af4" stroke="#f4f4f4" stroke-width="1.200"></circle></g>
<!-- ie/idm -->
<g><ellipse cx="397.500" cy="15" rx="8" ry="6.500" fill="#4aa83a"></ellipse><path d="M390 17c3-5 9-8 15-6" stroke="#f0d838" stroke-width="2.200" fill="none"></path><circle cx="397.500" cy="14" r="3" fill="#2a68c8"></circle></g>
<!-- word -->
<g><rect x="430" y="7" width="12" height="15" fill="#3a8ae0"></rect><rect x="427" y="9.500" width="9.500" height="10" fill="#1858b0"></rect><path d="M429 12l1 5 1.200-4 1.200 4 1-5" stroke="#fff" stroke-width=".9" fill="none"></path></g>
<!-- weather -->
<g><circle cx="578.500" cy="15" r="10" fill="#f5a623"></circle><circle cx="574.500" cy="11.500" r="9" fill="#3d1d35"></circle><path d="M566.500 13.500a3.500 3.500 0 0 1 3-5 4.500 4.500 0 0 1 8.500 1 3 3 0 0 1 .5 6h-10a2.500 2.500 0 0 1-2-2z" fill="#e4ecf8"></path><path d="M567 13.500h13" stroke="#5aa0e8" stroke-width="1.200"></path></g>
<!-- chevron up -->
<path d="M650.500 18l5.700-5.700 5.700 5.700" stroke="#eee" stroke-width="1.300" fill="none"></path>
<!-- meet now -->
<g stroke="#eee" stroke-width="1.100" fill="none"><rect x="684" y="8" width="7" height="13" rx="1.500"></rect><path d="M683 10h9M693 12.500l2.500-1.500v7l-2.500-1.500"></path><circle cx="687.500" cy="16.500" r="1.300"></circle></g>
<!-- onedrive -->
<g><path d="M713.500 19.500a3.500 3.500 0 0 1 .5-7 5.200 5.200 0 0 1 10-1 4 4 0 0 1 1 8z" fill="#f0f0f0"></path><circle cx="723.500" cy="19" r="4.300" fill="#1f78d8"></circle><path d="M723.500 17v.1M723.500 18.600v2.500" stroke="#fff" stroke-width="1.100"></path></g>
<!-- battery -->
<g><rect x="744.500" y="10.500" width="14.500" height="8.500" fill="none" stroke="#eee" stroke-width="1.100"></rect><rect x="746" y="12" width="5" height="5.500" fill="#eee"></rect><rect x="759.500" y="13" width="1.500" height="3.500" fill="#eee"></rect></g>
<!-- volume -->
<g stroke="#eee" stroke-width="1.100" fill="none"><path d="M776 12.500h2.500l3.500-3v11l-3.500-3H776z"></path><path d="M784.500 12.500c1 1.500 1 3 0 4.500M787 10.500c2 3 2 5.500 0 8.500"></path></g>
<!-- wifi -->
<g stroke="#eee" stroke-width="1.200" fill="none"><path d="M810.500 21a10.500 10.500 0 0 1 10.500-10.500M814 21a7 7 0 0 1 7-7M817.500 21a3.500 3.500 0 0 1 3.500-3.500"></path></g><circle cx="820.500" cy="20.500" r="1" fill="#eee"></circle>
<!-- link -->
<g stroke="#eee" stroke-width="1.200" fill="none"><circle cx="845" cy="18" r="3"></circle><circle cx="851.500" cy="11.500" r="3"></circle><path d="M847 16l2.500-2.500"></path></g>
<!-- notification -->
<path d="M939 8.500h15.500v11h-5.500l-3 3.500v-3.500h-7z" stroke="#eee" stroke-width="1.200" fill="none"></path>
</svg>
<span class="t" style="left: 891px; font-size: 16px; color: rgb(244, 244, 244); top: 698.28px; letter-spacing: -1.737px;">21°C</span>
<span class="t" style="left: 1162.7px; font-size: 12.5px; color: rgb(244, 244, 244); top: 699.52px; letter-spacing: -0.497px;">11:30 PM</span>
<!-- ===== MAP OUTPUT ===== -->
<svg id="map" style="left:278px;top:206px;overflow:hidden;filter:blur(.4px)" width="978" height="469" viewBox="278 206 978 469" font-family="'Liberation Sans',sans-serif">
<defs>
<pattern id="gA" width="3.600" height="3.600" patternUnits="userSpaceOnUse"><path d="M0 .3h3.600M.3 0v3.600" stroke="#eeedeb" stroke-width=".8"></path></pattern>
<pattern id="gB" width="4" height="4" patternUnits="userSpaceOnUse" patternTransform="rotate(44)"><path d="M0 .3h4M.3 0v4" stroke="#eeedeb" stroke-width=".8"></path></pattern>
<pattern id="gC" width="4" height="4" patternUnits="userSpaceOnUse" patternTransform="rotate(-27)"><path d="M0 .3h4M.3 0v4" stroke="#eeedeb" stroke-width=".8"></path></pattern>
<pattern id="gD" width="4" height="4" patternUnits="userSpaceOnUse" patternTransform="rotate(12)"><path d="M0 .3h4M.3 0v4" stroke="#eeedeb" stroke-width=".8"></path></pattern>
<pattern id="gS" width="7" height="2.700" patternUnits="userSpaceOnUse"><path d="M0 .3h7M.3 0v2.700" stroke="#e9e8e7" stroke-width=".7"></path></pattern>
<pattern id="wet" width="6" height="4" patternUnits="userSpaceOnUse"><path d="M.5 1h2.500M3.500 3h2.500" stroke="#7fbf9f" stroke-width=".7"></path></pattern>
</defs>
<rect x="278" y="206" width="978" height="469" fill="#acd5dd"></rect>

<!-- LAND -->
<g fill="#f2efe9">
<path id="marin" d="M319 206L328 213L337.500 220.400L348 231L358 241L366 249L374 255L379 257L384.500 254L390 257L395 261L404 266L413 270.500L417 278L421 286L429 296L437.600 306L441 312L444 317.500L446 321L455 325L462 326L466 332L469 338L465 342L463 345L468 349L474 354L479 360L482.600 364L484 358L483.600 352.700L488 347L493 341.500L500 340L507 339.400L516 342L525.500 344.500L532 350.700L539.400 352.700L543 349L546.600 344.500L552 339L558.800 335.300L568 336L579.300 338.400L581 335L581.300 330L592.600 323.700L596.700 316.500L592 306L587.500 296L583 290L581.300 286L583 276L585.400 267.500L583 260L579.300 255L568 247L558.800 241L552 232L546.600 224.500L538 215L530 206Z"></path>
<path id="tiburon" d="M592.600 206L597 215L601.800 224.500L609 232L616 238.800L620 243L624.300 245L627 241L626.300 236.800L621 230L616 224.500L622 221L628.300 219.400L635 219L642.600 218.400L649 212L655 206Z"></path>
<path id="angel" d="M650 249L655 246L660 243L664 238L668 232L673 225L680 221.500L685 223L688 226L691 231L694 236L698 241L702 247L699 252L698 256L699 262L701 268.500L695 265L690 263L685 262.500L680 262L675 264.500L671 266L666 263.500L661 261L657 257L653 253Z" stroke="#b4d6a0" stroke-width="1.500"></path>
<path id="sf" d="M539 675L535 653L531 632L527 610L524.700 591L522.700 560L520 540L518.600 522L517 505L515.600 491L514 475L512.500 461L511.500 456.600L513 450L515 446L518.600 440.200L524 442L530 440L536.400 438.600L546 437.500L556.800 436.500L563 434L569 430.400L572 421L575.200 412L578 400L581.300 389.500L585 381L589.500 381.300L595 384.500L601.800 387.500L612 389.500L622.200 390.500L632 389.500L642.600 387.500L653 386L663 384.400L669 383L675.400 381.300L682 381L689.700 382.300L694 380L697.800 378.300L707 378L716.200 379.300L722 381L728.500 383.400L735 387L740.800 391.500L746 398L749.500 405.900L752.500 412L756 418L759.500 424L763 430.400L766 436L768.800 442.600L769.500 452L768.600 460.700L773 467L776.800 473L773 480L768.600 487.200L772 497L776.800 507.700L774 516L770.700 524L780 528L789 532.200L789 544.500L797 549L801.300 553L805.400 558.200L799 561L793 564.300L800 572L807.500 578.600L817 584L825.900 588.800L826 600L821.800 611.300L815 615L807.500 617.500L800 613L793 609.300L787 604L780.900 599L777 603L776.800 607.200L782 613L787 619.500L785 628L783 635.900L790 638.500L775 640.500L756.400 640L757 657L758.400 675Z"></path>
<ellipse cx="693.800" cy="336.400" rx="5.200" ry="3" transform="rotate(25 693.800 336.400)" fill="#cfe5b5"></ellipse>
<path id="ti" d="M785.300 328.200L791 325L798.600 323L803 330L808 340L814 350.700L808 355L802.700 358.800L799 365L796.600 371L806 371.500L817 373L816 378L814 383.400L807 384L800.700 383.400L797 380.500L795.600 377L793 371L796 364L794 355L790 345L787 337Z"></path>
<path id="eastbay" d="M928 206L930 220L932 234.700L936 250L940 267.500L943 280L944 286L945.500 296L930 296.500L911 298L912 303L930 306L945.800 310.400L948 320L950 330L945 336L929 338L915 340L903 343L880 347L856 350L850 349L848 355L856 355L880 351L900.800 351.500L917.200 355.800L911 364L902.900 373L896.700 381.300L885 385L870 388L860 390.500L862 395.600L870 392L878.300 388.500L880 395L880.400 402L880.400 410L878.300 416L876.300 427L876.300 438.600L879 445L883 448.400L895.400 454.500L909.700 456.600L917.800 464.700L921 462L922 452L943 452L944.400 460.700L938 468L932 475L954.600 479L964.900 489.300L973 495.400L985.300 485.200L990 492L1003.300 505.400L1023.300 518.700L1052 527.500L1072 536.400L1069.800 539.700L1045.400 540.800L1021 549.700L1018.800 550L1027.700 567.700L1043.200 592L1041 596.600L1109.700 658.600L1118.600 654.200L1118.600 638.700L1125.200 632L1140.700 625.400L1136.300 638.700L1145.200 652L1160.700 654.200L1158.500 665.300L1154 675L1256 675L1256 206Z"></path>
</g>
<!-- berkeley marina -->
<path d="M892.600 214.300L902.900 211.200L910 224L903 227.500Z" fill="#c6f2d0"></path><path d="M912 206L929 206L929 238.800L919.200 238.800L916 226L918 214Z" fill="#c2eec8"></path><path d="M905 206L912 206L918 214L916 226L910 224L903 211Z" fill="#b4dcdc" stroke="#86c8a6" stroke-width="1"></path>
<path d="M901 227h15v3h-15zM903 233h12v3h-12zM905 240h3v13h-3zM912 240h3v10h-3z" fill="#e6eef0"></path>
<path d="M921.300 238.800V299H944M921.300 238.800L929 238M911 310.500L909 334L930 336.500L947 334M911 310.500L946 313" fill="none" stroke="#86c8a6" stroke-width="1.300"></path>
<!-- URBAN -->
<clipPath id="landclip"><use href="#sf"></use><use href="#eastbay"></use><use href="#marin"></use><use href="#tiburon"></use><use href="#ti"></use></clipPath>
<g clip-path="url(#landclip)">
<!-- SF base -->
<path d="M505 436L572 436L646 436L646 388L700 376L745 392L775 440L800 540L835 585L830 620L760 645L760 680L530 680Z" fill="#d4d3d2"></path>
<path d="M519 446L692 446L692 476.500L519 476.500Z" fill="#cfcfd0"></path><path d="M519 446L692 446L692 476.500L519 476.500Z" fill="url(#gS)"></path>
<path d="M518 492L612 492L612 575L596 600L575 588L525 580Z" fill="#cfcfd0"></path><path d="M518 492L612 492L612 575L596 600L575 588L525 580Z" fill="url(#gS)"></path>
<path d="M646 390L700 380L744 394L768 440L700 440L646 436Z" fill="url(#gD)"></path>
<path d="M612 492L700 492L760 500L772 520L790 540L800 560L760 580L700 575L640 600L612 575Z" fill="url(#gA)"></path>
<path d="M700 436L770 440L775 500L750 500L700 470Z" fill="url(#gB)"></path>
<path d="M600 600L700 580L760 585L760 640L720 640L680 648L640 655L600 650Z" fill="url(#gD)"></path>
<!-- SF east industrial -->
<path d="M756 500L778 505L790 532L800 552L792 566L770 560L760 530Z" fill="#e4e0e1"></path>
<path d="M790 564L826 588L822 612L806 618L790 606L782 590Z" fill="#e6e2da"></path>
<!-- Marin/Sausalito -->
<path d="M530 206L546 224L559 241L580 255L586 268L581 286L568 292L561 282L553 268L546 259L535 240L524 220L524 206Z" fill="#dddcdb"></path>
<path d="M435 206L440 215L450 225L466 238L495 234L511 255L530 265L546 259L535 240L524 220L524 206Z" fill="#eeeee6"></path>
<path d="M500 210L520 206L528 230L540 250L530 262L516 252L506 236Z" fill="#e0e4da"></path>
<path d="M374 248L388 246L392 256L380 258Z" fill="#dcdcdc"></path>
<!-- Tiburon -->
<path d="M600 206L650 206L640 218L620 222L624 240L612 232Z" fill="#e6e4e0"></path>
<!-- treasure island -->
<path d="M787 330L798 325L812 350L802 356Z" fill="#e2e0de"></path><path d="M787 330L798 325L812 350L802 356Z" fill="url(#gC)"></path>
<!-- EAST BAY base -->
<path d="M900 200L1046 200L1047 222L1055 243L1085 245L1095 262L1085 278L1092 292L1128 292L1140 300L1172 322L1170 340L1176 353L1143 360L1144 372L1152 380L1192 381L1196 402L1177 410L1186 420L1190 436L1200 446L1226 452L1256 468L1256 680L1010 680L1010 500L985 480L960 440L960 420L900 340Z" fill="#dfdedc"></path>
<path d="M928 200L1046 200L1050 240L1000 300L1000 350L950 335Z" fill="url(#gD)"></path>
<path d="M950 335L1030 350L1050 395L980 400L934 392L934 372Z" fill="url(#gC)"></path>
<path d="M1030 350L1110 340L1170 420L1256 470L1256 640L1200 600L1120 500L1050 440Z" fill="url(#gC)"></path>
<path d="M1000 300L1050 240L1085 245L1095 262L1085 278L1110 340L1030 350L1000 350Z" fill="url(#gA)"></path>
<path d="M1140 560L1200 600L1256 640L1256 680L1160 680L1162 650Z" fill="url(#gC)"></path>
<!-- hills residential lighter (Montclair / Piedmont) -->
<path d="M1093 282L1128 292L1140 300L1172 322L1170 340L1176 353L1143 360L1125 345L1108 320Z" fill="#dcdbd9"></path>
<!-- Port of Oakland industrial -->
<path d="M896 381L962 372L975 400L960 422L900 416L880 410L880 395Z" fill="#e9e2e4"></path><path d="M897 384L950 378L972 388L972 402L950 406L910 402Z" fill="#ebdbe8"></path>
<path d="M900 351L917 356L903 373L897 381L870 388L860 390L862 396L880 395L896 381L934 372L945 360L958 346L950 336L930 340Z" fill="#e8e4e0"></path>
<path d="M940 338L958 342L946 362L934 376L934 392L946 398L930 396L926 376Z" fill="#e9e3e2"></path>
<!-- Alameda -->
<path d="M876 414L945 428L945 480L932 475L917 465L895 455L879 446Z" fill="#efeee8"></path>
<path d="M945 428L984 423L996 432L1050 455L1063 476L1086 490L1090 500L1072 536L1052 527L1023 518L1003 505L985 486L973 495L955 479L945 480Z" fill="#e0dfdd"></path>
<path d="M945 428L984 423L996 432L1050 455L1063 476L1086 490L1090 500L1072 536L1052 527L1023 518L1003 505L985 486L973 495L955 479L945 480Z" fill="url(#gC)"></path>
<path d="M948 432L975 428L980 470L950 470Z" fill="#e9e1e6"></path>
<!-- Bay farm -->
<path d="M1021 549L1045 541L1070 540L1062 548L1058 570L1068 590L1044 593L1028 568Z" fill="#dddcdb"></path>
<!-- airport ground -->
<path d="M1062 548L1090 540L1112 575L1134 590L1140 626L1125 632L1118 639L1118 654L1110 658L1041 596L1044 592L1068 590Z" fill="#ece9e4"></path>
<!-- coliseum/industrial east of SL bay -->
<path d="M1110 505L1140 540L1165 580L1140 600L1132 556L1123 527Z" fill="#ebe3e8"></path>
<path d="M1160 655L1175 640L1200 660L1195 680L1154 680Z" fill="#e4e2de"></path>
</g>
<!-- estuary + inlets (water over land) -->
<path d="M868 411.500L884.500 412L900.800 418L933.500 425L960 425L982.600 422L994.900 429L1010 437L1018.800 443L1030 446L1045.400 446L1050 455L1056 466L1063 476L1075 484L1085.300 490L1090 498L1094 507" fill="none" stroke="#acd5dd" stroke-width="6" stroke-linejoin="round"></path>
<path d="M1004 432L1018 437L1032 440L1046 441L1052 452L1048 456L1040 449L1024 449L1010 443Z" fill="#acd5dd"></path>
<path d="M1018 446L1034 449L1044 452L1040 456L1024 453Z" fill="#e4e2de"></path>
<path d="M880.400 389.500L892.600 391L892.600 401.800L882 403Z" fill="#acd5dd"></path>
<path d="M950 392L972 388L973 392L951 396Z" fill="#acd5dd"></path>
<path d="M1052 440L1066 452L1078 462L1086 474L1094 486" fill="none" stroke="#acd5dd" stroke-width="3"></path>
<!-- GREENS -->
<g>
<!-- Marin headlands -->
<path d="M428 206L435.600 206L440 215L450 225L458 232L466 238.800L475 238L485 235L494.900 234.700L503 243L511 255L520 262L530 265L540 262L546.600 259.300L553 268L560.900 281.800L568 292L567 308.300L572 318L579.300 326.700L581 335L579.300 338.400L568 336L558.800 335.300L552 339L546.600 344.500L543 349L539.400 352.700L532 350.700L525.500 344.500L516 342L507 339.400L500 340L493 341.500L488 347L483.600 352.700L484 358L482.600 364L479 360L474 354L468 349L463 345L465 342L469 338L466 332L462 326L455 325L446 321L444 317.500L441 312L437.600 306L429 296L421 286L417 278L413 270.500L404 266L395 261L398 252L403 244L408 235L413 226.600L420 216Z" fill="#cadfab" stroke="#9ccd8c" stroke-width="1.800"></path>
<path d="M468 324L478 322L482 326L474 329Z" fill="#acd5dd"></path><path d="M470 318L480 314L484 318L474 322Z M516 300L524 297L526 303L518 305Z M498 308L508 312L506 315L497 311Z" fill="#dfe9cf"></path>
<!-- fort baker -->
<path d="M568 292L578 293L587.500 296L592 306L596.700 316.500L592.600 323.700L581.300 330L579.300 326.700L572 318L567 308.300Z" fill="#d4e8b8" stroke="#a9d19a" stroke-width="1.200"></path>
<!-- top-left reserve outlines -->
<path d="M330 214L345 222L356 221L363 232L372 240M356 221L370 214L380 206M372 240L385 232L396 230L404 218L420 210M385 232L382 218L392 208M440 215L452 210L465 213L478 208L492 212L505 207M466 238L470 226L482 222L495 226L506 220L518 224L524 214" fill="none" stroke="#bcdcb2" stroke-width="1.400"></path>
<!-- richardson bay reserve -->
<path d="M555.800 206L560 212L572 216L583 213L585.400 206" fill="#b8dcc6" stroke="#8fcf9e" stroke-width="1.200"></path>
<!-- Presidio -->
<path d="M585 382.500L595 385.500L601.800 388.500L612 390.500L622.200 391.500L632 390.500L642.600 388.500L645 400L645.500 416L645 431L632 433.500L620 436L600 437L575 438L569 431L572 421L575.200 412L578 400L581.300 389.500Z" fill="#d2ebb6"></path>
<path d="M604 410L616 404L628 408L634 420L628 430L614 432L606 424Z" fill="#b6d6a0"></path>
<path d="M585 395L596 392L598 420L590 432L576 434L574 424Z" fill="#c6e2a8"></path>
<!-- fort mason / marina green -->
<path d="M675.400 382L688.600 382.500L688.600 394.600L676 394.600Z" fill="#c8f0c4"></path>
<!-- Lincoln park / lands end -->
<path d="M511.500 456.600L513 450L515 446L518.600 440.200L524 442L530 440L536.400 438.600L546 437.500L556.800 436.500L563 434L569 430.400L572 437L560 441L548 444L537 447.500L528 452L521 457L515 459Z" fill="#c4e4a6" stroke="#9fd08f" stroke-width="1"></path>
<!-- Golden Gate park -->
<path d="M520.300 476.500L631 476L631 483.500L660 483.500L660 487L631 487L631 491.500L521.500 492Z" fill="#cdf0c4"></path>
<path d="M540 479h18v8h-18zM575 478h22v6h-22z" fill="#bfe6b0"></path>
<!-- Twin peaks / hills -->
<path d="M616 500L626 498L630 510L627 522L618 520L614 510Z" fill="#cfe8b8"></path>
<path d="M632 528L650 524L662 534L658 546L642 548L634 540Z" fill="#d6ecc0"></path>
<path d="M648 560L668 556L680 566L672 576L654 574Z" fill="#d2ebbc"></path>
<!-- Lake Merced area -->
<path d="M537 582.700L555 585L571.800 588.800L572 606L571.800 623.600L584 624.500L596.300 625.600L594 640L592.200 652.200L570 654.500L547.200 656.300L541 644L537 631.800L531 612L526.800 595L530 588Z" fill="#d3ecb6"></path>
<path d="M539 586.800L545 588L551.300 590.900L556 600L562 612L567.700 625.600L559.500 627.700L553 618L546 607L539 599Z" fill="#acd5dd"></path>
<path d="M548 622L558 630L556 640L549 634Z" fill="#acd5dd"></path>
<!-- McLaren -->
<path d="M678 606L690 600L706 602L721 608L718 622L704 630L688 632L680 622Z" fill="#d0eeb9"></path>
<path d="M692 605L704 603L712 612L702 620L692 616Z" fill="#bfe4a8"></path>
<!-- San Bruno mtn -->
<path d="M637.200 656.300L645 654L653.500 654.300L660 650L668 651L680 648L688 655L694.400 664.500L690 670L686.200 675L637 675Z" fill="#c9e2ad" stroke="#a4cf94" stroke-width="1.200"></path>
<path d="M600 650L612 646L616 675L598 675Z" fill="#d6eec0"></path>
<!-- bayview / candlestick -->
<path d="M758 640L770 640L776 652L768 662L758 664Z" fill="#cfe6b0"></path>
<path d="M770 598L781 600L777 607L786 619L783 634L775 632L772 612Z" fill="#c8f2c8"></path>
<path d="M782 590L792 588L800 600L794 610L786 604Z" fill="#c8c8a4"></path>
<path d="M762 610L770 608L774 624L766 628Z" fill="#c4c4a0"></path>

<!-- EAST BAY HILLS -->
<!-- light scrub base for hills -->
<path d="M1120 206L1256 206L1256 470L1238 462L1218 452L1204 440L1196 405L1192 380L1172 322L1140 300L1128 290L1118 250Z" fill="#eef0e4"></path>
<path d="M1180 240L1200 236L1222 244L1246 252L1256 262L1256 300L1240 296L1222 288L1204 290L1188 282L1178 262Z" fill="#d4ecbc"></path>
<path d="M1230 262L1242 248L1256 246L1256 272L1244 276Z" fill="#c6e6a8"></path>
<path d="M1226 212L1248 218L1256 226L1256 206L1224 206Z" fill="#d0e8b4"></path>
<path d="M1232 220L1254 226L1254 236L1238 232Z" fill="#c0e0a4"></path>
<!-- Tilden/Claremont -->
<path d="M1046 212L1062 206L1168 206L1155 222L1140 232L1125 240L1117 252L1108 250L1100 238L1085 240L1070 235L1055 243L1050 232L1047 222Z" fill="#cde4b2"></path>
<path d="M1050 214L1070 208L1080 216L1072 228L1056 232Z M1094 212L1120 208L1128 222L1112 236L1098 230Z" fill="#bddba2"></path>
<path d="M1118 248L1128 255L1135 270L1133 285L1128 292L1124 275L1120 262Z" fill="#bddba2"></path>
<path d="M1125.500 275.600L1136.700 275L1130.600 292Z" fill="#b4d69a"></path>
<path d="M1083 250L1092 248L1094 258L1084 260Z" fill="#cfeabc"></path>
<path d="M1096.800 267.500L1114.200 268L1112 281.800L1098 281Z" fill="#c8f4cc"></path>
<path d="M1154 236L1164 234L1166 246L1158 250Z" fill="#c8f4cc"></path>
<!-- reserve outlines -->
<path d="M1132 246L1148 246L1150 258L1162 268L1166 282L1182 282L1186 300L1200 304L1196 316L1180 318L1172 310L1160 312L1156 296L1152 282L1140 270Z" fill="#f3f1ea" stroke="#a6cf9a" stroke-width="1.200"></path>
<path d="M1232 206L1230 222L1256 234" fill="none" stroke="#a6cf9a" stroke-width="1.200"></path>
<!-- Mountain view cemetery -->
<path d="M1050.800 310L1062 304L1076 308L1081 318L1070 326L1054 324Z" fill="#aacbaf"></path>
<!-- Redwood regional park -->
<path d="M1171.400 322L1183 320L1196 324L1206 332L1216.400 340.400L1226 348L1236.900 356.800L1246 365L1256 373L1256 405.900L1243 407.900L1234 402L1226.600 395.600L1216 391L1206.200 387.500L1205 396L1204.200 405.900L1196 401.800L1194 392L1192 381.300L1192 367L1184 359L1175.500 352.700L1172 344L1169.400 336.400Z" fill="#b5d6a0" stroke="#9ccb8c" stroke-width="1"></path>
<path d="M1142.800 360L1160 358.800L1176 356L1192 367L1192 381.300L1170 382L1152 380L1144 372Z" fill="#cdf4cc"></path>
<path d="M1196 324L1216 318L1240 322L1256 330L1256 373L1236.900 356.800L1216.400 340.400Z" fill="#d6edbc"></path>
<path d="M1175.500 397.700L1190 396L1202 402L1200 418L1186 418L1177 410Z" fill="#d0eab6"></path>
<path d="M1185.800 420L1204 422L1220 430L1218 450L1200 446L1188 436Z" fill="#cdf2c8"></path>
<path d="M1189.500 430L1200 432L1214 440L1214 452L1198 446Z" fill="#c2dea6"></path>
<path d="M1218 430L1240 432L1256 440L1256 467.700L1240 462L1226 452Z" fill="#b9d9a0"></path>
<path d="M1216.400 432L1247 436L1250 450L1230 452Z" fill="#b9d9a0"></path>
<!-- lake merritt -->
<path d="M1021 384L1030 383.400L1038.600 388L1036 398L1030 405.900L1022 404L1020.200 395Z" fill="#acd5dd"></path>
<path d="M1016 380L1042 380L1040 410L1018 408Z" fill="#d6f0c8" opacity=".0"></path>
<!-- SL bay (MLK shoreline) -->
<path d="M1094.200 505.400L1109.700 505.400L1117 517L1123 527.500L1128 541L1131.900 554L1128 563L1120 572L1112 575L1105 565L1098 550L1089.800 540.800L1080 539L1072 538.600L1072 536.400L1080 528L1089.800 518.700L1092 511Z" fill="#b0dcd2" stroke="#8fd0b0" stroke-width="1.100"></path>
<path d="M1116.400 559L1134 559L1134 574.400L1118 574.400Z" fill="#c8f6d0"></path>
<!-- Bay farm golf / airport -->
<path d="M1069.800 594.300L1090 592L1105.300 598L1104 616L1092 627.600L1078 620Z" fill="#cdeeb4"></path>
<path d="M1069.800 594.300L1090 592L1105.300 598L1104 616L1092 627.600L1078 620Z" fill="url(#wet)"></path>
<path d="M1089.800 561L1100 560L1134 596L1134 605.400L1120 606L1094 582Z" fill="#dadae0"></path>
<path d="M1096 600L1114 604L1122 622L1110 634L1100 624Z" fill="#dddde4"></path>
<path d="M1041 596.600L1044.500 593L1113 655L1109.700 658.600Z" fill="#e4e4e4"></path>
<path d="M1062 548L1078 546L1084 560L1080 584L1068 590L1058 570Z" fill="#d2ecb4"></path>
<path d="M1138.500 627.600L1150 626L1160.700 636L1158 650L1146 652L1138 640Z" fill="#d6f2c8"></path>
<path d="M1140 600L1152 596L1160 610L1150 622L1140 618Z" fill="#d8efbc"></path>
<!-- alameda point green -->
<path d="M884 436L896 434L900 446L894 452L885 448Z" fill="#cfe0a8"></path>
<path d="M908 454L918 456L917 464L910 460Z" fill="#cfe0a8"></path>
</g>
<!-- BOUNDARIES / FERRIES -->
<g fill="none">
<path stroke-width="1.300" d="M278 340.400C290 350 300 358 308.800 366C320 378 330 390 339.500 401.800C348 412 354 418 357.900 424.300C362 432 364 437 365 442.600C368 470 374 520 380 570L388 638.500L392 675" stroke="#9094a4"></path>
<path d="M308.800 365.600H483" stroke="#8290a0" stroke-width=".8" stroke-dasharray="6 2 1.500 2"></path>
<path d="M483 363L358 425.500L278 465.500" stroke="#7cc4a8" stroke-width="1.600"></path>
<path d="M388 639.500H1029L1037.700 632L1020 616.500L1044.300 592" stroke="#8290a0" stroke-width=".8" stroke-dasharray="6 2 1.500 2"></path>
<path d="M990 656.400L1001 674" stroke="#9a98a4" stroke-width=".9"></path>
<path d="M1123 636.500L1138.500 674" stroke="#8e8c9c" stroke-width=".9" stroke-dasharray="5 2 1.500 2"></path>
<path d="M798.600 206L833.400 330L868 412L874.900 430L940.300 560L1000 672.600" stroke="#9a98a8" stroke-width="1"></path>
<path d="M596 318L701.500 269.500L694 206" stroke="#a8a0b8" stroke-width="1"></path>
<path d="M833 312L939.700 283.800M810 232L905 206" stroke="#94a0b4" stroke-width=".9" stroke-dasharray="5 2 1.500 2"></path>
<g stroke="#7fa8d0" stroke-width="1" stroke-dasharray="3.500 2.500">
<path d="M585 262L640 300L700 352L740 388L757 415"></path><path d="M588 275L650 330L715 382L745 402L757 416"></path><path d="M624 222L640 260L660 300L700 340L745 390"></path><path d="M655 228L668 224L680 218"></path>
<path d="M704 206L712 250L728 320L748 385L757 414"></path><path d="M722 206L735 270L752 350L760 400L758 415"></path><path d="M758 416L790 398L830 380L870 372L905 378"></path><path d="M759 418L785 420L810 408L840 396L880 396L900 402"></path>
<path d="M770 462L795 458L818 448L835 430L850 408" stroke="#6f9fd8"></path><path d="M827 430L830 500L835 550L842.200 597L823.800 674.700"></path><path d="M759 419L800 436L850 470L900 500L950 535L1000 570L1040 596"></path><path d="M760 420L820 452L880 486L915 480L935 466L944 462"></path>
<path d="M770 470L790 466L810 455"></path>
</g>
</g>

<!-- RAIL -->
<g fill="none" stroke="#6e6e6e" stroke-width="1.100">
<path d="M936 206L940 234L948 268L952 300L958 330L948 362L950 388L975 404L1000 416L1030 432L1052 439L1105.300 478.800L1149.600 523L1189.500 571L1211.700 594.300L1256 638.700"></path>
<path d="M1056 438L1110 478L1154 520L1194 568L1256 632" stroke-width=".9"></path>
<path d="M1185 572L1171.800 605.400L1189.500 649.800L1202.800 675.200" stroke-width=".9"></path>
<path d="M760 456L762 490L765 522L765.700 547L761 566L751 596L742 620L737 640L737 675" stroke="#666" stroke-width="1.300" stroke-dasharray="2 3"></path><path d="M753 549L749 580L746.700 609L740 622L736 630" stroke="#777" stroke-width=".9"></path>
</g>

<!-- SECONDARY (yellow) -->
<g fill="none" stroke="#f4f2a8" stroke-width="1.500" stroke-linecap="round" stroke-linejoin="round">
<path d="M518.600 458L519.500 492L522 540L526 590"></path><path d="M548.300 493V584"></path><path d="M520 507H612M520 534H600M520 560H596M520 462H690M520 470H650"></path>
<path d="M612 492L614 520L622 540L640 560L650 590L646 620"></path><path d="M631 476V440"></path><path d="M660 440V500L668 540L680 575"></path><path d="M646 404H690M646 420H756M646 436H700"></path>
<path d="M700 380L704 440M720 382L726 440M740 394L736 440"></path><path d="M640 540L680 530L720 520L760 522"></path><path d="M650 590L700 600L740 596"></path><path d="M612 575L640 600L680 640L720 660"></path><path d="M572 588V624M530 640H596"></path><path d="M700 505V575M726 500V570"></path>
<path d="M548 250L565 262L580 262L586 275L582 290L590 300"></path>
<path d="M960 206L966 250L972 300L974 336"></path><path d="M992 206L996 260L1000 300L1002 340"></path><path d="M1020 206L1022 250L1018 300L1010 340"></path><path d="M940 236H1046M946 270H1040M950 300L1030 296"></path>
<path d="M1040 236L1070 250L1090 262"></path><path d="M1030 350L1060 330L1090 325L1108 320"></path><path d="M1040 376L1080 372L1110 360L1126 348"></path><path d="M1065 390L1100 380L1140 372"></path><path d="M1050 410L1090 420L1130 440L1160 470L1200 500L1240 540L1256 560"></path><path d="M1090 404L1100 440L1130 480L1170 520L1210 570L1256 600"></path><path d="M1114 412L1150 400L1168 402"></path><path d="M1134 422L1160 440L1180 446"></path><path d="M1150 480L1190 470L1225 472"></path><path d="M1180 510L1220 500L1247 508"></path><path d="M1200 540L1240 530"></path>
<path d="M1187.800 212.300L1200 230L1236.900 261.300L1253.200 294"></path><path d="M1128 292L1140 320L1150 340"></path><path d="M1176 353L1184 372L1196 402L1210 430L1240 460"></path>
<path d="M934 372L960 350L975 340"></path><path d="M896 381L905 392L960 410"></path><path d="M900 351L912 362L945 366"></path>
<path d="M880 420L945 436L990 440L1050 470L1080 500L1072 536"></path><path d="M945 428V478"></path><path d="M960 446L1000 470L1040 500L1060 520"></path>
<path d="M1021 552L1045 546L1062 552L1058 572L1044 590"></path><path d="M1030 566L1056 562"></path>
<path d="M1160 655L1200 630L1240 610L1256 606"></path><path d="M1175 640L1210 660L1230 675"></path>
</g>
<!-- white streets -->
<g fill="none" stroke="#fbfaf7" stroke-width="1" stroke-linecap="round">
<path d="M980 206L988 340M1008 206L1010 340M1034 206L1030 340M940 252H1046M944 286L1040 283M948 318L1030 312"></path>
<path d="M1060 400L1100 460L1150 520L1200 580M1080 396L1120 450L1180 510L1240 580M1120 430L1180 480L1256 550"></path>
<path d="M1100 300L1120 320L1140 345L1160 350M1110 330L1130 340"></path>
<path d="M534 446V476M562 446V476M590 446V476M618 446V476M648 446V476M534 492V580M576 492V588M604 492V590"></path>
<path d="M680 440V575M740 440L744 560M646 450H760M640 560H760"></path>
</g>

<!-- PRIMARY (orange) -->
<g fill="none" stroke="#f8d4a0" stroke-width="1.800" stroke-linecap="round" stroke-linejoin="round">
<path d="M331 206L355.900 212L362 224L366 236.800L378.300 240.900L402.900 238.800L408 230L413 222.500L425.400 206"></path>
<path d="M520 456.600H680L700 452"></path><path d="M520 493.400H632L660 488"></path><path d="M631 476L660 476L700 470L740 450"></path>
<path d="M697.800 379L720 381L742 394L756 414L768 438"></path><path d="M689.700 402.800L760 412"></path>
<path d="M700 470L730 500L760 530L780 560"></path><path d="M660 488V540"></path><path d="M596 640L640 620L690 612L740 600"></path><path d="M540 590L560 640L580 675"></path><path d="M596 652L620 650L640 640"></path><path d="M700 575L690 612L700 648"></path>
<path d="M954 206L960 240L968 290L974.400 330L990 372L1010 396L1040 420"></path><path d="M974 268L1010 262L1046.800 256"></path><path d="M1010 206L1012 262L1010 320L1004 342"></path><path d="M940 300L1000 296"></path>
<path d="M1040 420L1067.600 447.700L1114 478.800L1167.300 509.800L1189.500 523L1211.700 554L1233.900 583.300L1256 614.300"></path>
<path d="M1149.600 525.300L1167.300 514L1200 500"></path><path d="M1149.600 556.700L1143 590L1134 612L1125 622L1118.600 625.400L1114 620L1118 612L1128 612"></path><path d="M1143 592L1189.500 567.700L1211.700 550"></path><path d="M1174 616.500L1211.700 603.200L1256 601"></path>
<path d="M1200.600 550L1233.900 583.300"></path>
<path d="M990 478L1010 486L1040 505L1060 525L1072 536"></path>
<path d="M985 444L996 470L990 484"></path>
</g>

<!-- MOTORWAYS (pink) -->
<g fill="none" stroke="#de8499" stroke-linecap="round" stroke-linejoin="round">
<g stroke-width="2.200">
<!-- 101 marin + GG bridge -->
<path d="M524 206L524 220L524 234.700L530 249L546.600 259.300L553 268L560.900 281.800L568 292L567 308.300L572 318L579.300 326.700L581.300 340.400L583 360L585.400 381.300L589.500 390.500L599.700 398.700L618 398.700L634.500 396.700L650.800 406.900L689.700 402.800L693.800 418L695.800 430.400L697 445L698 470"></path>
<!-- 80 / bay bridge -->
<path d="M929.400 206L931 220L933.500 234.700L937 250L941.700 267.500L945.800 285.900L948.900 306.300L952 320L954 333.300L929.400 339.400L902.900 345.600L880 349L855.900 352.700L837.500 356.800L826 364L817 371L804.800 383.400L790 402L770 428.300L756 446L744 456.600" stroke-width="2.700"></path>
<!-- 580 -->
<path d="M954 333.300L974.400 336.400L1005 342.500L1022 345L1032.400 354.800L1036 365L1040.600 375.200L1052 383L1065 389.500L1089.700 403.800L1114.200 412L1134.600 422.200L1140 430L1144.900 436.500L1149.600 440L1160 443L1171.400 445.700L1178.400 445.500L1187.800 450L1200.600 456.600L1212 463L1225 471L1231 478L1236 485.400L1242 496L1247 507.600L1244 518L1240.500 529.800L1246 542L1253.800 556.400L1256 562" stroke-width="2.400"></path>
<!-- 880 -->
<path d="M954 334.300L958 346.600L945.800 360.900L933.500 375.200L932 384L933.500 391.500L945.800 398.700L974.400 398.700L994.900 407.900L1015.300 422.200L1032.400 432.400L1045.400 438.900L1063 454.400L1078.700 470L1100.800 483.200L1110 498L1118.600 512L1130 529L1140.700 545.300L1154 567.400L1167.300 583.300L1189.500 612L1211.700 634.200L1233.900 654.200L1253.800 672" stroke-width="2.400"></path>
<!-- 980 -->
<path d="M1007 320L1005 342.500L1001 365L990.800 373L980 384L975 398"></path>
<!-- 24 -->
<path d="M1171.400 206L1164 216L1155 228.600L1140 236L1126.500 240.900L1118.300 253L1110 263.400L1097.900 269.500L1085.600 278.700L1074 279L1063 276.700L1046.800 286.900L1022 296L1008 306L1007 320"></path>
<!-- 13 -->
<path d="M1085.600 278.700L1089.700 292L1102 310.400L1108 320L1114.200 328.800L1126.500 348.600L1142.800 373L1167.400 401.800L1179.600 426.300L1184 440L1187.800 450"></path>
<!-- 280 / 101 south SF -->
<path d="M756 446L750 450L744 456.600L742 466L742 475L750 490L756.400 503.600L757 518L756.400 532.200L750 545L742 556.700L731.200 562.300L723 572.500L704.600 579.600L680 577.600L659.700 584.800L647.400 595L641.300 615.400L633 629.700L612.600 633.800L596 640"></path>
<path d="M733 530L731 542L726 558L725 570.400L735.300 590.900L743.500 619.500L750.200 640L755.300 674.700"></path>
<path d="M697 470L706 478L718 482L726 487L729 496L732 506L735 514L733 530"></path>
<path d="M744 456.600L730 470L718 482"></path>
</g>
<!-- hwy 1 (trunk, thinner) -->
<g stroke-width="2" stroke="#eaa094">
<path d="M599.700 398.700L600.700 422.200L595.600 442.600L594.300 470.900L582 477L584 487L586 497.500L588 530L589 560L590.200 607.200L597.300 623.600L598.300 640L596.300 672.600"></path>
<path d="M689.700 402.800L693.800 418"></path>
</g>
</g>
<rect x="846" y="347" width="9" height="9" fill="#f0c4d0" transform="rotate(-10 850 351)"></rect>
<!-- PEAKS -->
<g fill="#d08a50">
<path id="pk" d="M0 -2.200L2.300 1.800H-2.300Z" transform="translate(458 229)"></path>
<use href="#pk" x="36" y="33"></use><use href="#pk" x="16" y="68"></use><use href="#pk" x="85" y="44"></use><use href="#pk" x="102" y="85"></use><use href="#pk" x="84" y="103"></use><use href="#pk" x="220" y="20"></use>
<use href="#pk" x="129" y="188"></use><use href="#pk" x="153" y="192"></use><use href="#pk" x="207" y="198"></use><use href="#pk" x="227" y="197"></use><use href="#pk" x="270" y="170"></use><use href="#pk" x="252" y="182"></use>
<use href="#pk" x="132" y="258"></use><use href="#pk" x="144" y="258"></use><use href="#pk" x="138" y="289"></use><use href="#pk" x="170" y="292"></use><use href="#pk" x="178" y="260"></use><use href="#pk" x="181" y="268"></use><use href="#pk" x="200" y="261"></use><use href="#pk" x="204" y="269"></use><use href="#pk" x="192" y="274"></use><use href="#pk" x="188" y="281"></use><use href="#pk" x="200" y="286"></use><use href="#pk" x="212" y="291"></use><use href="#pk" x="222" y="289"></use><use href="#pk" x="187" y="303"></use><use href="#pk" x="147" y="310"></use><use href="#pk" x="200" y="315"></use><use href="#pk" x="216" y="317"></use><use href="#pk" x="164" y="324"></use>
<use href="#pk" x="163" y="347"></use><use href="#pk" x="176" y="340"></use><use href="#pk" x="208" y="325"></use><use href="#pk" x="250" y="330"></use><use href="#pk" x="157" y="387"></use><use href="#pk" x="180" y="368"></use><use href="#pk" x="240" y="383"></use><use href="#pk" x="285" y="290"></use>
<use href="#pk" x="560" y="-12"></use><use href="#pk" x="562" y="-5"></use><use href="#pk" x="582" y="-1"></use><use href="#pk" x="625" y="4"></use><use href="#pk" x="643" y="16"></use><use href="#pk" x="660" y="8"></use><use href="#pk" x="680" y="-12"></use><use href="#pk" x="688" y="0"></use><use href="#pk" x="688" y="34"></use><use href="#pk" x="699" y="57"></use><use href="#pk" x="790" y="20"></use><use href="#pk" x="732" y="130"></use>
<use href="#pk" x="561" y="157"></use><use href="#pk" x="632" y="268"></use><use href="#pk" x="623" y="281"></use>
</g>
<!-- route shields -->
<g font-size="6" fill="#4c3a20" text-anchor="middle">
<rect x="378.500" y="236" width="23" height="9.500" rx="1.500" fill="#fbe6c4" stroke="#d8b888" stroke-width=".6"></rect><text x="390" y="243.300">CA 1</text>
<rect x="526.500" y="606" width="24.500" height="10" rx="1.500" fill="#fbe6c4" stroke="#d8b888" stroke-width=".6"></rect><text x="538.700" y="613.400">CA 35</text>
<rect x="980" y="473.500" width="24" height="10" rx="1.500" fill="#fbe6c4" stroke="#d8b888" stroke-width=".6"></rect><text x="992" y="481">CA 61</text>
</g>
<!-- exit numbers along motorways -->
<g font-size="4.500" fill="#c8385c" text-anchor="middle" font-style="italic">
<text x="527" y="210">445A</text><text x="536" y="246">444</text><text x="548" y="255">444</text><text x="571" y="316">442</text><text x="578" y="324">441</text><text x="592" y="392">439</text><text x="606" y="396">438</text><text x="626" y="394">437</text>
<text x="862" y="355">4A</text><text x="903" y="343">4A</text><text x="918" y="340">4A</text><text x="925" y="337">1A</text><text x="960" y="342">42</text><text x="976" y="336">19A</text><text x="997" y="340">19C</text><text x="1004" y="346">2A</text><text x="1020" y="346">19C</text>
<text x="938" y="394">44</text><text x="946" y="400">42A</text><text x="991" y="403">1A</text><text x="1015" y="424">41A</text><text x="1037" y="363">21A</text><text x="1045" y="378">21B</text><text x="1066" y="389">22</text><text x="1091" y="404">22B</text><text x="1130" y="420">24</text><text x="1153" y="439">25B</text><text x="1172" y="445">26A</text>
<text x="1104" y="312">4</text><text x="1125" y="348">3</text><text x="1142" y="374">2</text><text x="1167" y="402">1C</text><text x="1062" y="278">2A</text><text x="1072" y="280">5A</text><text x="1090" y="292">5B</text>
<text x="1028" y="432">41A</text><text x="1046" y="440">40</text><text x="1064" y="455">39B</text><text x="1080" y="470">39A</text><text x="1103" y="498">37</text><text x="1120" y="512">36</text><text x="1141" y="546">35</text><text x="1166" y="583">34</text><text x="1186" y="611">34</text><text x="1200" y="624">33</text><text x="1211" y="634">33A</text>
<text x="1204" y="458">27</text><text x="1226" y="472">29</text><text x="1238" y="487">30</text><text x="1248" y="508">31A</text><text x="1242" y="530">32</text><text x="1254" y="556">33</text>
<text x="722" y="472">434A</text><text x="734" y="474">433</text><text x="754" y="490">1B</text><text x="758" y="518">432</text><text x="752" y="544">432</text><text x="748" y="558">431</text><text x="716" y="576">54</text><text x="700" y="580">53</text><text x="660" y="585">52</text><text x="646" y="600">51</text><text x="640" y="618">50</text><text x="618" y="632">49</text><text x="604" y="648">49B</text><text x="738" y="592">430</text><text x="744" y="606">429C</text><text x="748" y="620">429B</text><text x="752" y="640">429A</text>
</g>
<!-- LABELS -->
<g fill="#3c3c3c" text-anchor="middle" stroke="#f6f4f0" stroke-width="1.600" paint-order="stroke" stroke-opacity=".7">
<text x="726" y="439.800" font-size="10.500" textLength="65" lengthAdjust="spacingAndGlyphs">San Francisco</text>
<text x="999.500" y="397.800" font-size="10.500" textLength="39.500" lengthAdjust="spacingAndGlyphs" fill="#2c2c2c">Oakland</text>
<text x="996.500" y="228.500" font-size="10" textLength="38" lengthAdjust="spacingAndGlyphs">Berkeley</text>
<text x="969.300" y="328.500" font-size="9" textLength="44" lengthAdjust="spacingAndGlyphs">Emeryville</text>
<text x="1058.700" y="498" font-size="10.500" textLength="41" lengthAdjust="spacingAndGlyphs">Alameda</text>
<text x="1079" y="346.500" font-size="9.500" textLength="42" lengthAdjust="spacingAndGlyphs">Piedmont</text>
<text x="569" y="258" font-size="9" textLength="38" lengthAdjust="spacingAndGlyphs">Sausalito</text>
<text x="1206" y="600.500" font-size="10" text-anchor="start" word-spacing="1">San Leandro</text>
<text x="619" y="210" font-size="9" textLength="32" lengthAdjust="spacingAndGlyphs">Tiburon</text>
<text x="1185" y="210" font-size="9" textLength="30" lengthAdjust="spacingAndGlyphs">Orinda</text>
<g font-size="7.200" fill="#4a4a4a">
<text x="615" y="238.200" textLength="33" lengthAdjust="spacingAndGlyphs">Belvedere</text>
<text x="1009" y="303.500" textLength="52" lengthAdjust="spacingAndGlyphs">North Oakland</text>
<text x="961" y="378.200" textLength="50" lengthAdjust="spacingAndGlyphs">West Oakland</text>
<text x="1119.700" y="473" textLength="46" lengthAdjust="spacingAndGlyphs">East Oakland</text>
<text x="1184.700" y="395.200" textLength="46" lengthAdjust="spacingAndGlyphs">Oakland Hills</text>
<text x="1211" y="330.500" textLength="26" lengthAdjust="spacingAndGlyphs">Canyon</text>
<text x="594.700" y="452.500" textLength="36" lengthAdjust="spacingAndGlyphs">Richmond</text>
<text x="594.700" y="462.200" textLength="25" lengthAdjust="spacingAndGlyphs">District</text>
<text x="680" y="460.200" textLength="62" lengthAdjust="spacingAndGlyphs">Western Addition</text>
<text x="701.600" y="510.300" textLength="55" lengthAdjust="spacingAndGlyphs">Mission District</text>
<text x="549.300" y="527" textLength="51" lengthAdjust="spacingAndGlyphs">Sunset District</text>
<text x="758.500" y="576.300" textLength="54" lengthAdjust="spacingAndGlyphs">Bayview District</text>
</g>
</g>
<g font-size="6.200" fill="#e39aba" text-anchor="middle" font-style="italic">
<text x="561.500" y="635.500">San Francisco</text><text x="916.800" y="635.500">San Francisco</text>
<text transform="translate(372 500) rotate(84)">San Francisco</text>
<text transform="translate(617 304) rotate(-26)">Marin County</text>
<text transform="translate(819 274) rotate(74)">Alameda County</text>
<text transform="translate(876 462) rotate(64)">San Francisco</text>
<text transform="translate(912 502) rotate(62)">Alameda County</text>
</g>
<g font-size="5.800" fill="#3f9f5c" text-anchor="middle" font-style="italic">
<text x="1106.400" y="528">Martin</text><text x="1106.400" y="536">Luther</text><text x="1106.400" y="544">King Jr.</text><text x="1106.400" y="552">Regional</text><text x="1106.400" y="560">Shoreline</text>
<text x="1219" y="360">Reinhardt</text><text x="1219" y="367.500">Redwood</text><text x="1219" y="375">Regional</text><text x="1219" y="382.500">Park</text>
</g>
<text x="1108.600" y="607" font-size="9" fill="#6a5cc8" text-anchor="middle">✈</text>
<!-- muni metro dots -->
<g fill="#707884"><circle cx="522" cy="505" r="1.200"></circle><circle cx="548" cy="504.500" r="1.200"></circle><circle cx="566" cy="504" r="1.200"></circle><circle cx="586" cy="503" r="1.200"></circle><circle cx="608" cy="501" r="1.200"></circle><circle cx="623" cy="496" r="1.200"></circle><circle cx="641" cy="492" r="1.200"></circle><circle cx="551" cy="553" r="1.200"></circle><circle cx="581" cy="552" r="1.200"></circle><circle cx="609" cy="553" r="1.200"></circle><circle cx="623" cy="538" r="1.200"></circle><circle cx="686" cy="528" r="1.200"></circle><circle cx="686" cy="537" r="1.200"></circle><circle cx="687" cy="551" r="1.200"></circle></g>
<path d="M522 505L566 504L608 501L641 492L670 500M551 553H609L623 538L660 510L700 470M686 520V556" stroke="#8a8e98" stroke-width=".7" fill="none"></path>

<!-- CIRCLE MARKER -->
<circle cx="702" cy="469.300" r="33.800" fill="#3030ff" fill-opacity=".22" stroke="#1818a0" stroke-width="2.600"></circle>

<!-- ZOOM CONTROL -->
<rect x="284.200" y="213.500" width="23.400" height="44" rx="3" fill="#fff" stroke="#bdbdbd" stroke-width="1.300"></rect>
<path d="M285 235.500h22" stroke="#ccc" stroke-width=".8"></path>
<text x="296" y="230" font-size="15" font-weight="bold" fill="#111" text-anchor="middle">+</text>
<text x="296" y="251" font-size="15" font-weight="bold" fill="#111" text-anchor="middle">−</text>
</svg>


</body></html>
